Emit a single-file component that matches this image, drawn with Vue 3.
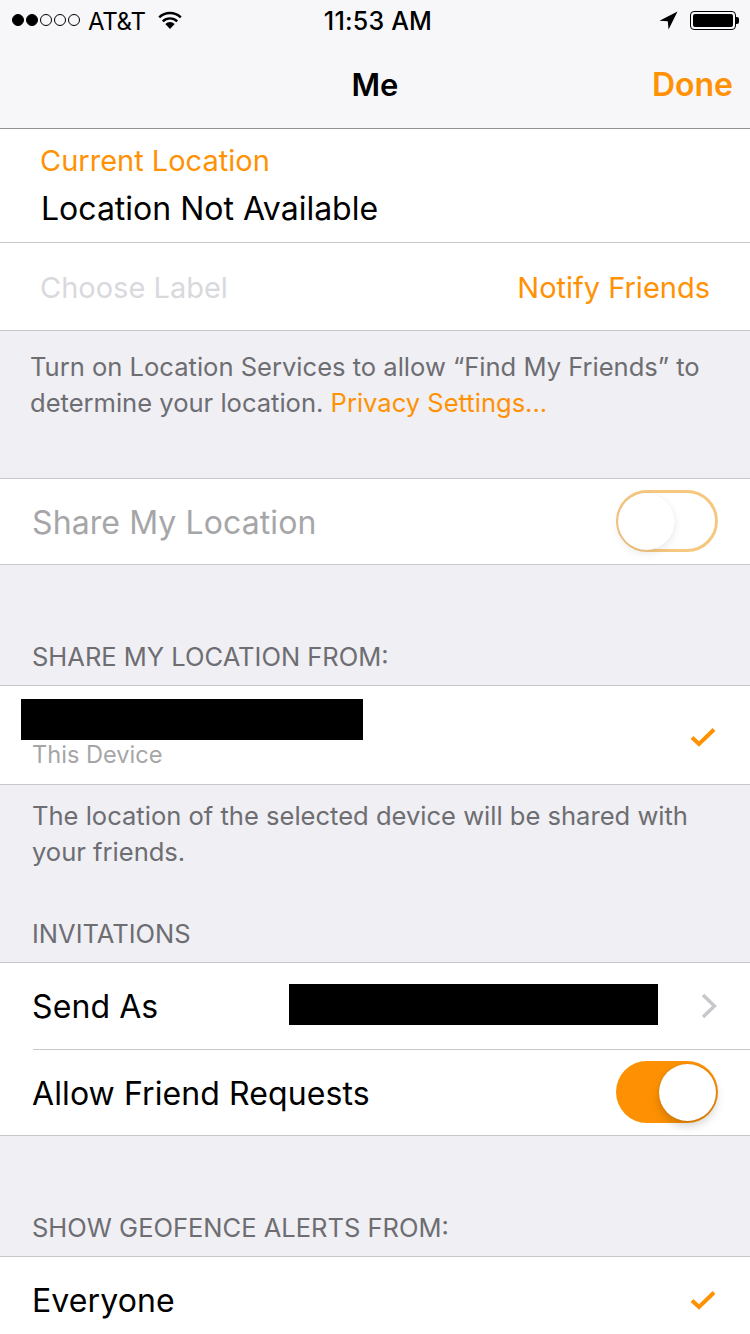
<script setup>
const dots = [true, true, false, false, false]
</script>

<template>
  <div class="screen">
    <header class="top">
      <div class="status">
        <div class="status-left">
          <span v-for="(on, i) in dots" :key="i" class="dot" :class="{ on }"></span>
          <span class="carrier">AT&amp;T</span>
          <svg class="wifi" width="24" height="18" viewBox="0 0 24 18">
            <path d="M12 18 7.300 13a6.800 6.800 0 0 1 9.400 0Z" fill="#000" />
            <path d="M4.800 10.300a10.400 10.400 0 0 1 14.400 0" fill="none" stroke="#000" stroke-width="2.400" />
            <path d="M1.200 6.300a15.800 15.800 0 0 1 21.600 0" fill="none" stroke="#000" stroke-width="2.400" />
          </svg>
        </div>
        <div class="clock">11:53 AM</div>
        <div class="status-right">
          <svg class="arrow" width="19" height="19" viewBox="0 0 20 20">
            <path d="M19.500 .5 .5 10.200l8.700.6.900 8.700Z" fill="#000" />
          </svg>
          <div class="battery"><span></span></div>
          <div class="nub"></div>
        </div>
      </div>
      <div class="nav">
        <div class="nav-title">Me</div>
        <div class="nav-done">Done</div>
      </div>
    </header>

    <section class="group first">
      <div class="current">
        <div class="orange-label">Current Location</div>
        <div class="location">Location Not Available</div>
      </div>
      <div class="label-row">
        <span class="placeholder">Choose Label</span>
        <span class="notify">Notify Friends</span>
      </div>
    </section>

    <p class="note note-top">
      Turn on Location Services to allow “Find My Friends” to determine your location.
      <span class="link">Privacy Settings...</span>
    </p>

    <section class="group">
      <div class="row">
        <span class="row-text muted">Share My Location</span>
        <div class="switch off"><span class="knob"></span></div>
      </div>
    </section>

    <h2 class="section-head head-from">SHARE MY LOCATION FROM:</h2>
    <section class="group">
      <div class="device">
        <div class="device-info">
          <div class="redact redact-name"></div>
          <div class="device-sub">This Device</div>
        </div>
        <svg class="check" width="28" height="22" viewBox="0 0 28 22">
          <path d="M3 11.500 10 18 25 3.500" fill="none" stroke="#ff9204" stroke-width="4" />
        </svg>
      </div>
    </section>

    <p class="note note-device">The location of the selected device will be shared with your friends.</p>

    <h2 class="section-head head-invite">INVITATIONS</h2>
    <section class="group">
      <div class="row send-as">
        <span class="row-text">Send As</span>
        <div class="redact redact-mail"></div>
        <svg class="chevron" width="18" height="26" viewBox="0 0 18 26">
          <path d="M3 2 14.500 13 3 24" fill="none" stroke="#c7c7cc" stroke-width="3.500" />
        </svg>
      </div>
      <div class="divider"></div>
      <div class="row">
        <span class="row-text">Allow Friend Requests</span>
        <div class="switch on"><span class="knob"></span></div>
      </div>
    </section>

    <h2 class="section-head head-fence">SHOW GEOFENCE ALERTS FROM:</h2>
    <section class="group last">
      <div class="row">
        <span class="row-text">Everyone</span>
        <svg class="check" width="28" height="22" viewBox="0 0 28 22">
          <path d="M3 11.500 10 18 25 3.500" fill="none" stroke="#ff9204" stroke-width="4" />
        </svg>
      </div>
    </section>
  </div>
</template>

<style>
html, body {
  margin: 0;
  background: #efeff4;
}
</style>

<style scoped>
.screen {
  width: 750px;
  height: 1334px;
  overflow: hidden;
  background: #efeff4;
  font-family: Inter, "Liberation Sans", sans-serif;
  color: #000;
}
.top {
  height: 128px;
  background: #f7f7f9;
  border-bottom: 1px solid #929292;
}
.status {
  height: 40px;
  display: grid;
  grid-template-columns: 1fr auto 1fr;
  align-items: center;
  padding: 0 11px 0 12px;
}
.status-left {
  display: flex;
  align-items: center;
}
.dot {
  width: 12px;
  height: 12px;
  margin-right: 2px;
  box-sizing: border-box;
  border: 1px solid #000;
  border-radius: 50%;
}
.dot.on {
  background: #000;
}
.carrier {
  margin-left: 6px;
  padding-top: 2px;
  font-size: 24px;
  letter-spacing: -0.3px;
}
.wifi {
  margin-left: 12px;
}
.clock {
  margin-left: 5px;
  padding-top: 2px;
  font-size: 25px;
  font-weight: 500;
  letter-spacing: 0.2px;
}
.status-right {
  display: flex;
  align-items: center;
  justify-content: flex-end;
}
.arrow {
  margin-right: 12px;
}
.battery {
  width: 46px;
  height: 19px;
  box-sizing: border-box;
  padding: 2px;
  border: 1px solid #000;
  border-radius: 4px;
}
.battery span {
  display: block;
  height: 100%;
  background: #000;
  border-radius: 2px;
}
.nub {
  width: 3px;
  height: 7px;
  background: #000;
  border-radius: 0 2px 2px 0;
}
.nav {
  position: relative;
  height: 88px;
  display: flex;
  align-items: center;
  justify-content: center;
}
.nav-title {
  font-size: 31px;
  font-weight: 600;
}
.nav-done {
  position: absolute;
  right: 17px;
  top: 25px;
  font-size: 32px;
  font-weight: 600;
  color: #ff9204;
}
.group {
  background: #fff;
  border-top: 1px solid #c8c7cc;
  border-bottom: 1px solid #c8c7cc;
}
.group.first {
  border-top: 0;
}
.group.last {
  border-bottom: 0;
}
.current {
  height: 114px;
  box-sizing: border-box;
  padding: 14px 41px 0 40px;
  border-bottom: 1px solid #c8c7cc;
}
.orange-label {
  font-size: 29px;
  line-height: 36px;
  color: #ff9204;
}
.location {
  margin-top: 10px;
  margin-left: 1px;
  font-size: 32px;
  line-height: 40px;
}
.label-row {
  height: 87px;
  box-sizing: border-box;
  display: flex;
  align-items: center;
  justify-content: space-between;
  padding: 2px 40px 0;
  font-size: 29px;
}
.placeholder {
  color: #d9d9dd;
}
.notify {
  color: #ff9204;
}
.note {
  margin: 0;
  color: #6d6d72;
  font-size: 25.55px;
  line-height: 36px;
}
.note-top {
  height: 147px;
  box-sizing: border-box;
  padding: 18px 30px 0;
}
.link {
  color: #ff9204;
}
.row {
  height: 85px;
  display: flex;
  align-items: center;
  justify-content: space-between;
  padding: 0 32px;
}
.row-text {
  padding-top: 2px;
  font-size: 32px;
  letter-spacing: 0.1px;
}
.muted {
  color: #a6a6a8;
}
.switch {
  position: relative;
  width: 102px;
  height: 62px;
  margin-top: -1px;
  box-sizing: border-box;
  border-radius: 31px;
}
.switch.off {
  border: 3px solid #f6c77f;
}
.switch.on {
  background: #fd9103;
}
.knob {
  position: absolute;
  width: 57px;
  height: 57px;
  background: #fff;
  border-radius: 50%;
}
.switch.off .knob {
  left: -1px;
  top: 0;
  box-shadow: 0 4px 9px rgba(0, 0, 0, 0.08), 0 0 1px rgba(0, 0, 0, 0.12);
}
.switch.on .knob {
  right: 2px;
  top: 3px;
  box-shadow: 0 5px 10px rgba(0, 0, 0, 0.18), 0 0 1px rgba(0, 0, 0, 0.25);
}
.section-head {
  margin: 0;
  box-sizing: border-box;
  padding: 0 32px;
  color: #6d6d72;
  font-size: 25.5px;
  font-weight: 400;
  line-height: 30px;
}
.head-from {
  height: 120px;
  padding-top: 77px;
}
.device {
  height: 98px;
  display: flex;
  align-items: flex-start;
  justify-content: space-between;
  padding: 0 33px 0 21px;
}
.device-info {
  padding-top: 13px;
}
.redact {
  background: #000;
}
.redact-name {
  width: 342px;
  height: 41px;
}
.device-sub {
  margin-top: 0;
  margin-left: 11px;
  color: #a6a6a8;
  font-size: 23.6px;
  line-height: 30px;
}
.device .check {
  margin-top: 40px;
}
.note-device {
  height: 112px;
  box-sizing: border-box;
  padding: 13px 33px 0 32px;
}
.head-invite {
  height: 65px;
  padding-top: 22px;
}
.send-as {
  justify-content: flex-start;
  height: 86px;
}
.send-as .row-text {
  width: 257px;
  padding-top: 0;
}
.redact-mail {
  width: 370px;
  height: 41px;
  margin-bottom: 4px;
}
.chevron {
  margin-left: 42px;
}
.divider {
  height: 1px;
  margin-left: 33px;
  background: #c8c7cc;
}
.head-fence {
  height: 120px;
  padding-top: 77px;
}
.last .row {
  padding-right: 33px;
}
</style>
